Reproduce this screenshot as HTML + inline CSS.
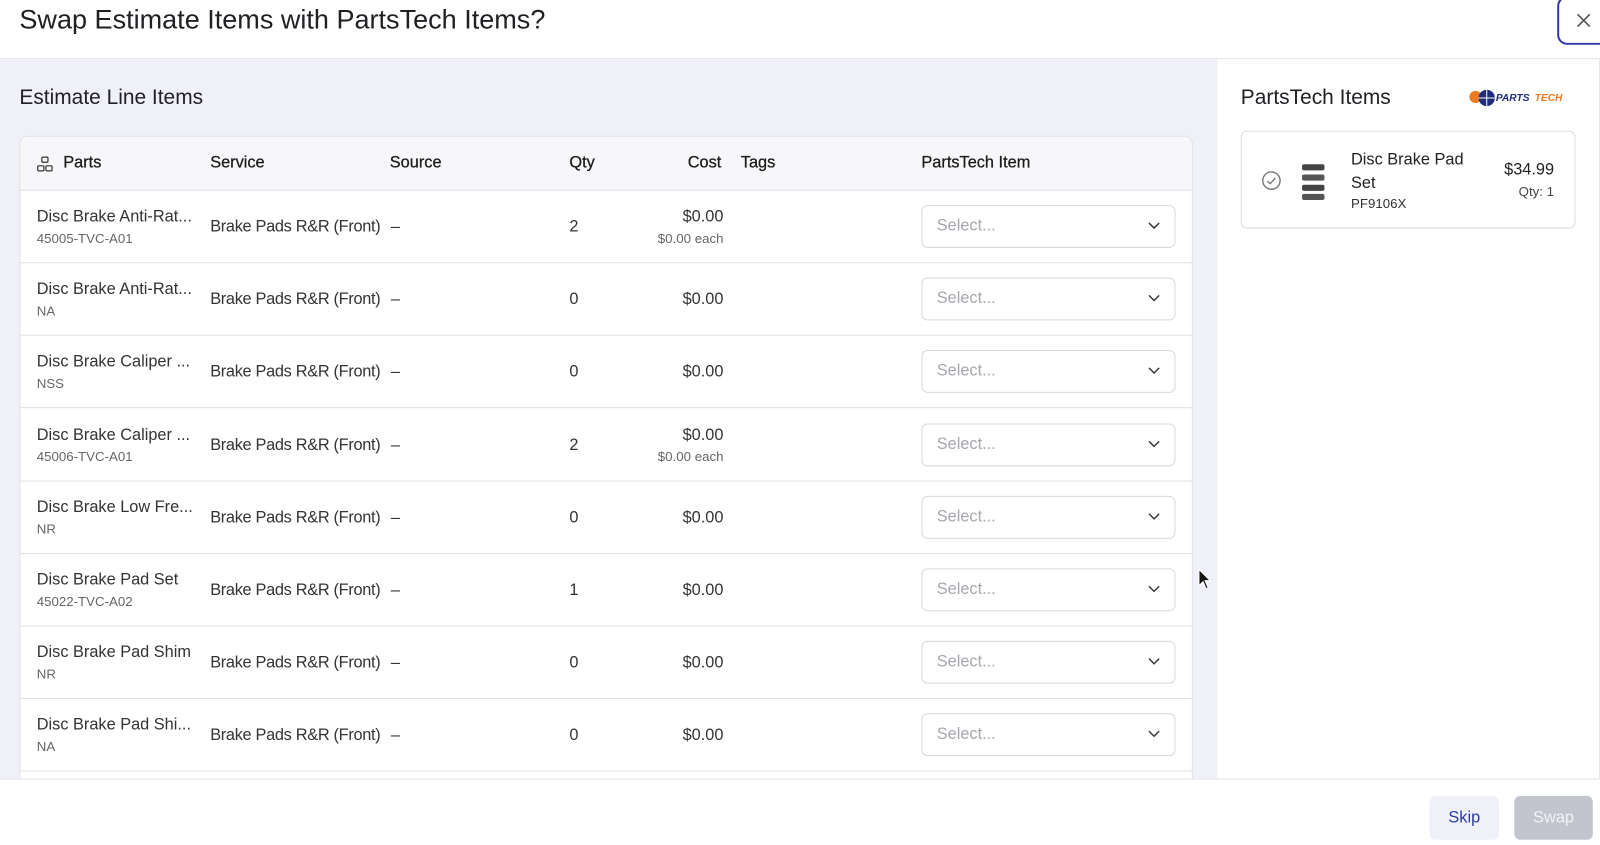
<!DOCTYPE html>
<html><head><meta charset="utf-8"><style>
*{box-sizing:border-box;margin:0;padding:0}
html,body{width:1600px;height:845px;overflow:hidden;background:#fff}
body{font-family:"Liberation Sans",Arial,sans-serif;color:#222;position:relative}
#w{position:absolute;left:0;top:0;width:1568px;height:828px;transform:scale(1.0204);transform-origin:0 0}
.a{position:absolute}
.hdr{left:0;top:0;width:1600px;height:58px;border-bottom:1px solid #e2e3ea;background:#fff}
.title{left:19px;top:4px;font-size:26.5px;color:#1f1f24}
.close{left:1526px;top:-4px;width:60px;height:48px;border:2px solid #2b3aa8;border-radius:10px;border-right:none}
.left{left:0;top:58px;width:1193px;height:705px;background:#f0f1f8}
.right{left:1193px;top:58px;width:375px;height:705px;background:#fff;border-right:1px solid #e6e6ea}
.tbl{left:19px;top:133px;width:1150px;height:640px;background:#fff;border:1px solid #e0e1e6;border-radius:8px;overflow:hidden}
.th{left:0;top:0;width:1150px;height:53px;background:#f7f7fa;border-bottom:1px solid #e0e1e6;font-size:16px;color:#1a1a1a;-webkit-text-stroke:0.25px #1a1a1a}
.th span{position:absolute;top:17px}
.row{left:0;width:1150px;height:71px;border-bottom:1px solid #e0e1e6;font-size:16px;color:#333}
.row .n{position:absolute;left:16px;top:17px}
.row .s{position:absolute;left:16px;top:39px;font-size:13px;color:#666}
.row .sv{position:absolute;left:186px;top:27px;width:170px;overflow:hidden;white-space:nowrap;letter-spacing:-0.3px}
.row .src{position:absolute;left:363px;top:27px}
.row .q{position:absolute;left:538px;top:27px}
.row .c{position:absolute;right:461px;top:27px;text-align:right}
.row .c2{position:absolute;right:461px;top:17px;text-align:right}
.row .ce{position:absolute;right:461px;top:39px;font-size:13px;color:#666}
.sel{position:absolute;left:883px;top:14px;width:249px;height:42px;border:1px solid #d8d9de;border-radius:6px;color:#a6a7ad;font-size:16px;padding:11px 14px}
.sel svg{position:absolute;right:14px;top:15px}
.footer{left:0;top:763px;width:1600px;height:82px;border-top:1px solid #e2e3ea;background:#fff}
.btn{top:780px;height:43px;border-radius:6px;font-size:16px;text-align:center;line-height:43px}
</style></head><body><div id="w">
<div class="a hdr"></div>
<div class="a title">Swap Estimate Items with PartsTech Items?</div>
<div class="a close"><svg class="a" style="left:16px;top:14px" width="16" height="16" viewBox="0 0 16 16"><path d="M2 2L14 14M14 2L2 14" stroke="#555" stroke-width="1.6"/></svg></div>
<div class="a left"></div>
<div class="a right"></div>
<div class="a" style="left:19px;top:84px;font-size:20.5px;color:#1f1f24">Estimate Line Items</div>
<div class="a" style="left:1216px;top:84px;font-size:20.5px;color:#1f1f24">PartsTech Items</div>
<div class="a" style="left:1438px;top:84px;width:106px;height:24px">
<svg width="106" height="24" viewBox="0 0 106 24"><circle cx="8" cy="11" r="6" fill="#f07a22"/><circle cx="19" cy="12" r="8" fill="#1f2d7a"/><path d="M11 12h16M19 4v16" stroke="#fff" stroke-width="1"/><text x="28" y="15" font-size="10" font-weight="bold" font-style="italic" fill="#1f2d7a" font-family="Liberation Sans">PARTS</text><text x="66" y="15" font-size="10" font-weight="bold" font-style="italic" fill="#f07a22" font-family="Liberation Sans">TECH</text></svg></div>
<div class="a" style="left:1216px;top:128px;width:328px;height:96px;border:1px solid #dcdde2;border-radius:6px">
<svg class="a" style="left:19px;top:38px" width="20" height="20" viewBox="0 0 20 20"><circle cx="10" cy="10" r="8.5" fill="none" stroke="#777" stroke-width="1.4"/><path d="M6 10.5l2.8 2.5 5-5.5" fill="none" stroke="#777" stroke-width="1.4"/></svg>
<svg class="a" style="left:56px;top:30px" width="32" height="40" viewBox="0 0 32 40"><rect x="3" y="2" width="22" height="6" rx="2" fill="#444"/><rect x="3" y="12" width="22" height="6" rx="2" fill="#555"/><rect x="3" y="22" width="22" height="6" rx="2" fill="#444"/><rect x="3" y="31" width="22" height="6" rx="2" fill="#555"/></svg>
<div class="a" style="left:107px;top:16px;font-size:16px;line-height:23px;color:#222">Disc Brake Pad<br>Set</div>
<div class="a" style="left:107px;top:63px;font-size:13px;color:#333">PF9106X</div>
<div class="a" style="right:20px;top:29px;font-size:16px;color:#222">$34.99</div>
<div class="a" style="right:20px;top:51px;font-size:13px;color:#444">Qty: 1</div>
</div>
<div class="a tbl">
<div class="a th">
<svg class="a" style="left:16px;top:19px" width="16" height="16" viewBox="0 0 16 16" fill="none" stroke="#333" stroke-width="1.2"><rect x="5" y="1" width="6" height="5" rx="1"/><rect x="1" y="9.5" width="6" height="5" rx="1"/><rect x="9" y="9.5" width="6" height="5" rx="1"/></svg>
<span style="left:42px">Parts</span><span style="left:186px">Service</span><span style="left:362px">Source</span><span style="left:538px">Qty</span><span style="left:654px">Cost</span><span style="left:706px">Tags</span><span style="left:883px">PartsTech Item</span>
</div>
<div id="rows"></div>
</div>
<div class="a footer"></div>
<div class="a btn" style="left:1401px;width:68px;background:#eff0f8;color:#2b3aa8">Skip</div>
<div class="a btn" style="left:1484px;width:77px;background:#c2c4ce;color:#f2f2f5">Swap</div>
<svg class="a" style="left:1174px;top:557px" width="14" height="22" viewBox="0 0 14 22"><path d="M1 1v16l4-4 3 7 2-1-3-7h5z" fill="#111" stroke="#fff" stroke-width="1"/></svg>
</div>
<script>
var d=[["Disc Brake Anti-Rat...","45005-TVC-A01","2",1],["Disc Brake Anti-Rat...","NA","0",0],["Disc Brake Caliper ...","NSS","0",0],["Disc Brake Caliper ...","45006-TVC-A01","2",1],["Disc Brake Low Fre...","NR","0",0],["Disc Brake Pad Set","45022-TVC-A02","1",0],["Disc Brake Pad Shim","NR","0",0],["Disc Brake Pad Shi...","NA","0",0],["","","",0]];
var h="";d.forEach(function(r,i){var t=53+i*71.2;
if(!r[0]){h+='<div class="a row" style="top:'+t+'px"></div>';return;}
h+='<div class="a row" style="top:'+t+'px"><div class="n">'+r[0]+'</div><div class="s">'+r[1]+'</div><div class="sv">Brake Pads R&amp;R (Front)</div><div class="src">–</div><div class="q">'+r[2]+'</div>'+(r[3]?'<div class="c2">$0.00</div><div class="ce">$0.00 each</div>':'<div class="c">$0.00</div>')+'<div class="sel">Select...<svg width="12" height="8" viewBox="0 0 12 8"><path d="M1 1.5l5 5 5-5" fill="none" stroke="#333" stroke-width="1.4"/></svg></div></div>';});
document.getElementById("rows").innerHTML=h;
</script>
</body></html>
